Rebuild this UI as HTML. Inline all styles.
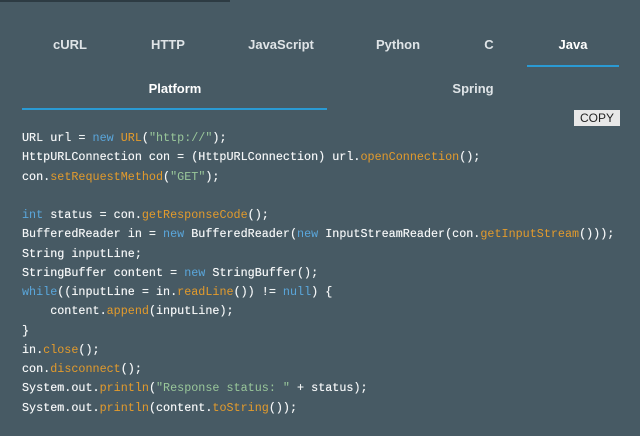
<!DOCTYPE html>
<html><head><style>
body{margin:0;width:640px;height:436px;background:#475a64;overflow:hidden;position:relative;font-family:"Liberation Sans",sans-serif}
.top{position:absolute;left:0;top:0;width:230px;height:2px;background:#2d3b43}
.t{position:absolute;color:#dfe4e7;font-weight:bold;font-size:13px;transform:translateX(-50%);white-space:nowrap}
.u{position:absolute;height:2px;background:#2a9ad3}
.copy{position:absolute;left:574px;top:110px;width:46px;height:16px;background:#e8e8e8;color:#222;font-size:12px;text-align:center;line-height:16px}
pre{position:absolute;left:22px;top:129px;margin:0;font-family:"Liberation Mono",monospace;font-size:11.75px;line-height:19.25px;color:#f4f6f7;font-weight:normal;text-shadow:0 0 0.4px #f4f6f7}
.k{color:#5aa7dc;text-shadow:none}.f{color:#e39b2c;text-shadow:none}.s{color:#99c79a;text-shadow:none}
</style></head><body>
<div class="top"></div>
<div class="t" style="left:70px;top:37px">cURL</div>
<div class="t" style="left:168px;top:37px">HTTP</div>
<div class="t" style="left:281px;top:37px">JavaScript</div>
<div class="t" style="left:398px;top:37px">Python</div>
<div class="t" style="left:489px;top:37px">C</div>
<div class="t" style="left:573px;top:37px;color:#fff">Java</div>
<div class="u" style="left:527px;top:65px;width:92px"></div>
<div class="t" style="left:175px;top:81px;color:#fff">Platform</div>
<div class="t" style="left:473px;top:81px">Spring</div>
<div class="u" style="left:22px;top:108px;width:305px"></div>
<div class="copy">COPY</div>
<pre>URL url = <span class="k">new</span> <span class="f">URL</span>(<span class="s">"http://"</span>);
HttpURLConnection con = (HttpURLConnection) url.<span class="f">openConnection</span>();
con.<span class="f">setRequestMethod</span>(<span class="s">"GET"</span>);

<span class="k">int</span> status = con.<span class="f">getResponseCode</span>();
BufferedReader in = <span class="k">new</span> BufferedReader(<span class="k">new</span> InputStreamReader(con.<span class="f">getInputStream</span>()));
String inputLine;
StringBuffer content = <span class="k">new</span> StringBuffer();
<span class="k">while</span>((inputLine = in.<span class="f">readLine</span>()) != <span class="k">null</span>) {
    content.<span class="f">append</span>(inputLine);
}
in.<span class="f">close</span>();
con.<span class="f">disconnect</span>();
System.out.<span class="f">println</span>(<span class="s">"Response status: "</span> + status);
System.out.<span class="f">println</span>(content.<span class="f">toString</span>());</pre>
</body></html>
